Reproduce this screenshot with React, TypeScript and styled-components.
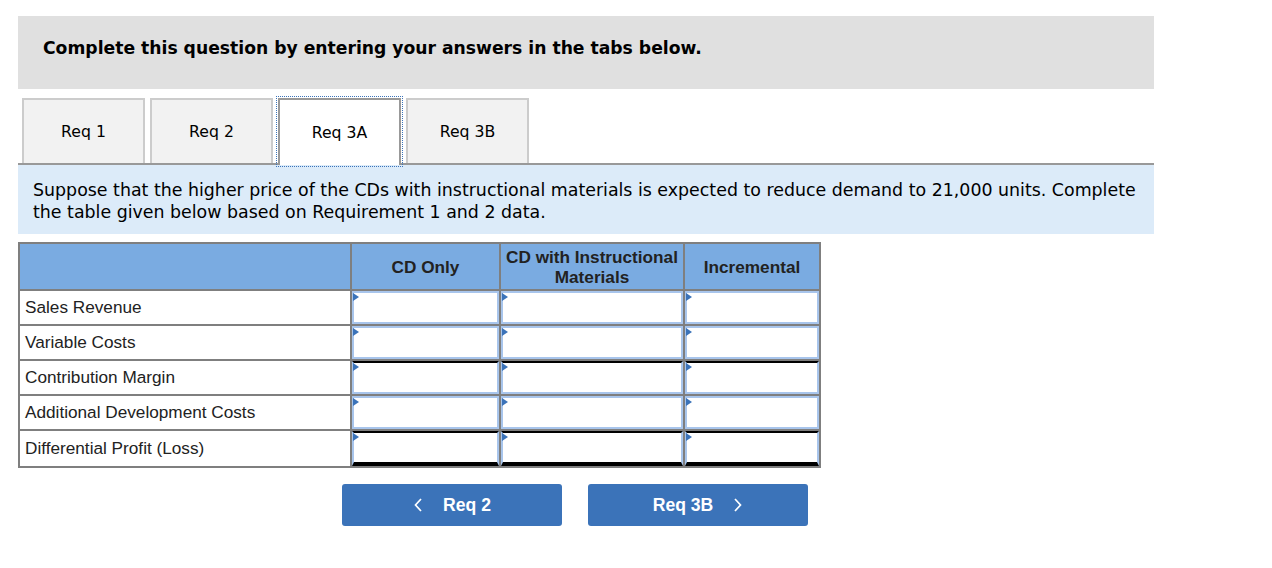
import styled, { createGlobalStyle } from 'styled-components';

const GlobalStyle = createGlobalStyle`
    body {
        margin: 0;
        background: #ffffff;
        font-family: "DejaVu Sans", Verdana, sans-serif;
        color: #000;
    }
`;

const tabs = ['Req 1', 'Req 2', 'Req 3A', 'Req 3B'];
const activeTab = 2;

const rows = [
    { label: 'Sales Revenue', total: false },
    { label: 'Variable Costs', total: false },
    { label: 'Contribution Margin', total: true },
    { label: 'Additional Development Costs', total: false },
    { label: 'Differential Profit (Loss)', total: true },
];

const App: React.FC = () => {
    return (
        <StyledPage>
            <GlobalStyle />
            <StyledBanner>Complete this question by entering your answers in the tabs below.</StyledBanner>
            <StyledTabsRow>
                {tabs.map((t, i) => (
                    <StyledTab key={t} active={i === activeTab}>
                        {t}
                    </StyledTab>
                ))}
            </StyledTabsRow>
            <StyledPrompt>
                Suppose that the higher price of the CDs with instructional materials is expected to reduce demand to
                21,000 units. Complete the table given below based on Requirement 1 and 2 data.
            </StyledPrompt>
            <StyledTable>
                <colgroup>
                    <col style={{ width: 332 }} />
                    <col style={{ width: 149 }} />
                    <col style={{ width: 184 }} />
                    <col style={{ width: 136 }} />
                </colgroup>
                <thead>
                    <tr>
                        <StyledHeadCell />
                        <StyledHeadCell>CD Only</StyledHeadCell>
                        <StyledHeadCell>
                            CD with Instructional
                            <br />
                            Materials
                        </StyledHeadCell>
                        <StyledHeadCell>Incremental</StyledHeadCell>
                    </tr>
                </thead>
                <tbody>
                    {rows.map((r, ri) => (
                        <tr key={r.label}>
                            <StyledLabelCell>{r.label}</StyledLabelCell>
                            {[0, 1, 2].map((c) => (
                                <StyledInputCell key={c}>
                                    <StyledInputBox total={r.total} last={ri === rows.length - 1}>
                                        <StyledMarker />
                                    </StyledInputBox>
                                </StyledInputCell>
                            ))}
                        </tr>
                    ))}
                </tbody>
            </StyledTable>
            <StyledNavRow>
                <StyledNavButton>
                    <Chevron dir="left" />
                    <span>Req 2</span>
                </StyledNavButton>
                <StyledNavButton>
                    <span>Req 3B</span>
                    <Chevron dir="right" />
                </StyledNavButton>
            </StyledNavRow>
        </StyledPage>
    );
};

const Chevron: React.FC<{ dir: 'left' | 'right' }> = ({ dir }) => (
    <svg width="10" height="16" viewBox="0 0 10 16">
        <path
            d={dir === 'left' ? 'M8 2 L2.5 8 L8 14' : 'M2 2 L7.5 8 L2 14'}
            fill="none"
            stroke="#fff"
            strokeWidth="1.7"
        />
    </svg>
);

const StyledPage = styled.div`
    width: 1136px;
    padding: 16px 0 0 18px;
`;

const StyledBanner = styled.div`
    height: 73px;
    background: #e0e0e0;
    padding: 22px 0 0 25px;
    box-sizing: border-box;
    font-size: 17.2px;
    font-weight: bold;
`;

const StyledTabsRow = styled.div`
    display: flex;
    gap: 5px;
    margin-top: 9px;
    padding-left: 4px;
    border-bottom: 2px solid #999999;
    height: 65px;
`;

const StyledTab = styled.div<{ active: boolean }>`
    width: 123px;
    height: 65px;
    box-sizing: border-box;
    display: flex;
    align-items: center;
    justify-content: center;
    font-size: 15.7px;
    background: ${(p) => (p.active ? '#ffffff' : '#f2f2f2')};
    border: 2px solid ${(p) => (p.active ? '#999999' : '#cccccc')};
    border-bottom: none;
    outline: ${(p) => (p.active ? '1px dotted #3b73b9' : 'none')};
    outline-offset: 1px;
    position: relative;
    ${(p) => (p.active ? 'height: 67px; margin-bottom: -2px;' : '')}
`;

const StyledPrompt = styled.div`
    background: #dcebf9;
    padding: 14px 6px 10px 15px;
    font-size: 17.4px;
    line-height: 22px;
    height: 69px;
    box-sizing: border-box;
`;

const StyledTable = styled.table`
    margin-top: 8px;
    border-collapse: collapse;
    table-layout: fixed;
    width: 802px;
    font-family: "Liberation Sans", Arial, sans-serif;
    border: 2px solid #7f7f7f;
`;

const StyledHeadCell = styled.th`
    background: #7aabe1;
    height: 45px;
    border: 2px solid #7f7f7f;
    font-size: 17.2px;
    font-weight: bold;
    line-height: 20px;
    color: #222;
    padding: 0;
    text-align: center;
`;

const StyledLabelCell = styled.td`
    border: 2px solid #7f7f7f;
    font-size: 17.2px;
    padding: 0 5px;
    color: #222;
`;

const StyledInputCell = styled.td`
    border: 2px solid #7f7f7f;
    padding: 0;
`;

const StyledInputBox = styled.div<{ total: boolean; last: boolean }>`
    position: relative;
    height: ${(p) => (p.last ? '35px' : '33px')};
    box-sizing: border-box;
    background: #ffffff;
    border: 2px solid #a8c5ec;
    border-top: ${(p) => (p.total ? '2px solid #000' : '2px solid #a8c5ec')};
    border-bottom: ${(p) => (p.last ? '4px solid #000' : '2px solid #a8c5ec')};
`;

const StyledMarker = styled.div`
    position: absolute;
    left: -1px;
    top: 0;
    width: 0;
    height: 0;
    border-top: 4px solid transparent;
    border-bottom: 4px solid transparent;
    border-left: 6px solid #3b73b9;
`;

const StyledNavRow = styled.div`
    display: flex;
    gap: 26px;
    margin: 16px 0 0 324px;
`;

const StyledNavButton = styled.div`
    width: 220px;
    height: 42px;
    border-radius: 3px;
    background: #3b73b9;
    color: #fff;
    display: flex;
    align-items: center;
    justify-content: center;
    gap: 20px;
    font-family: "Liberation Sans", Arial, sans-serif;
    font-weight: bold;
    font-size: 17.6px;
`;

export default App;
